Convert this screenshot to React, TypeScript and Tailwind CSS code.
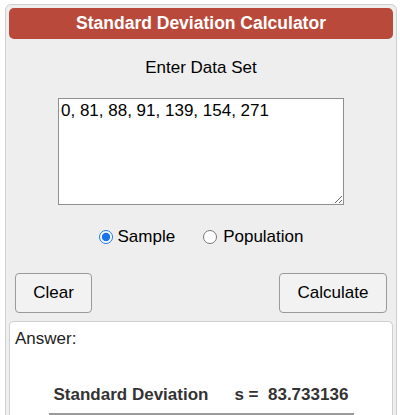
export default function App() {
  return (
    <div className="h-[415px] overflow-hidden bg-white pt-[4px] pl-[5px] font-['Liberation_Sans',Arial,sans-serif] text-[17px] text-black">
      <div className="w-[392px] rounded-[6px] border border-[#cfcfcf] bg-[#eeeeee] p-[3px] pb-0">
        <div className="flex h-[31px] items-center justify-center rounded-[5px] bg-[#b94a3b] text-[17.5px] font-bold text-white">
          Standard Deviation Calculator
        </div>

        <div className="mt-[19px] text-center leading-[20px]">Enter Data Set</div>

        <div className="mt-[20px] flex justify-center">
          <textarea
            defaultValue="0, 81, 88, 91, 139, 154, 271"
            className="h-[107px] w-[286px] resize border border-[#8f8f8f] bg-white px-[2px] py-[2px] text-[17px] leading-[20px] text-black outline-none"
          />
        </div>

        <div className="mt-[22px] flex items-center justify-center leading-[20px]">
          <label className="flex items-center">
            <input type="radio" name="kind" defaultChecked className="m-0 h-[14px] w-[14px] accent-[#1a73e8]" />
            <span className="ml-[5px]">Sample</span>
          </label>
          <label className="ml-[28px] flex items-center">
            <input type="radio" name="kind" className="m-0 h-[14px] w-[14px]" />
            <span className="ml-[6px]">Population</span>
          </label>
        </div>

        <div className="mt-[26px] flex justify-between px-[6px]">
          <button className="h-[40px] w-[77px] rounded-[4px] border border-[#9a9a9a] bg-[#f2f2f2] text-[17px]">
            Clear
          </button>
          <button className="h-[40px] w-[108px] rounded-[4px] border border-[#9a9a9a] bg-[#f2f2f2] text-[17px]">
            Calculate
          </button>
        </div>

        <div className="mt-[8px] h-[120px] rounded-t-[5px] border border-b-0 border-[#cfcfcf] bg-white px-[5px] pt-[7px]">
          <div className="leading-[20px] text-[#222]">Answer:</div>
          <div className="mx-auto mt-[36px] flex w-[305px] border-b-2 border-[#9a9a9a] pb-[8px] font-bold leading-[20px] text-[#333]">
            <span className="ml-[5px]">Standard Deviation</span>
            <span className="ml-[26px]">s =&nbsp; 83.733136</span>
          </div>
        </div>
      </div>
    </div>
  );
}
